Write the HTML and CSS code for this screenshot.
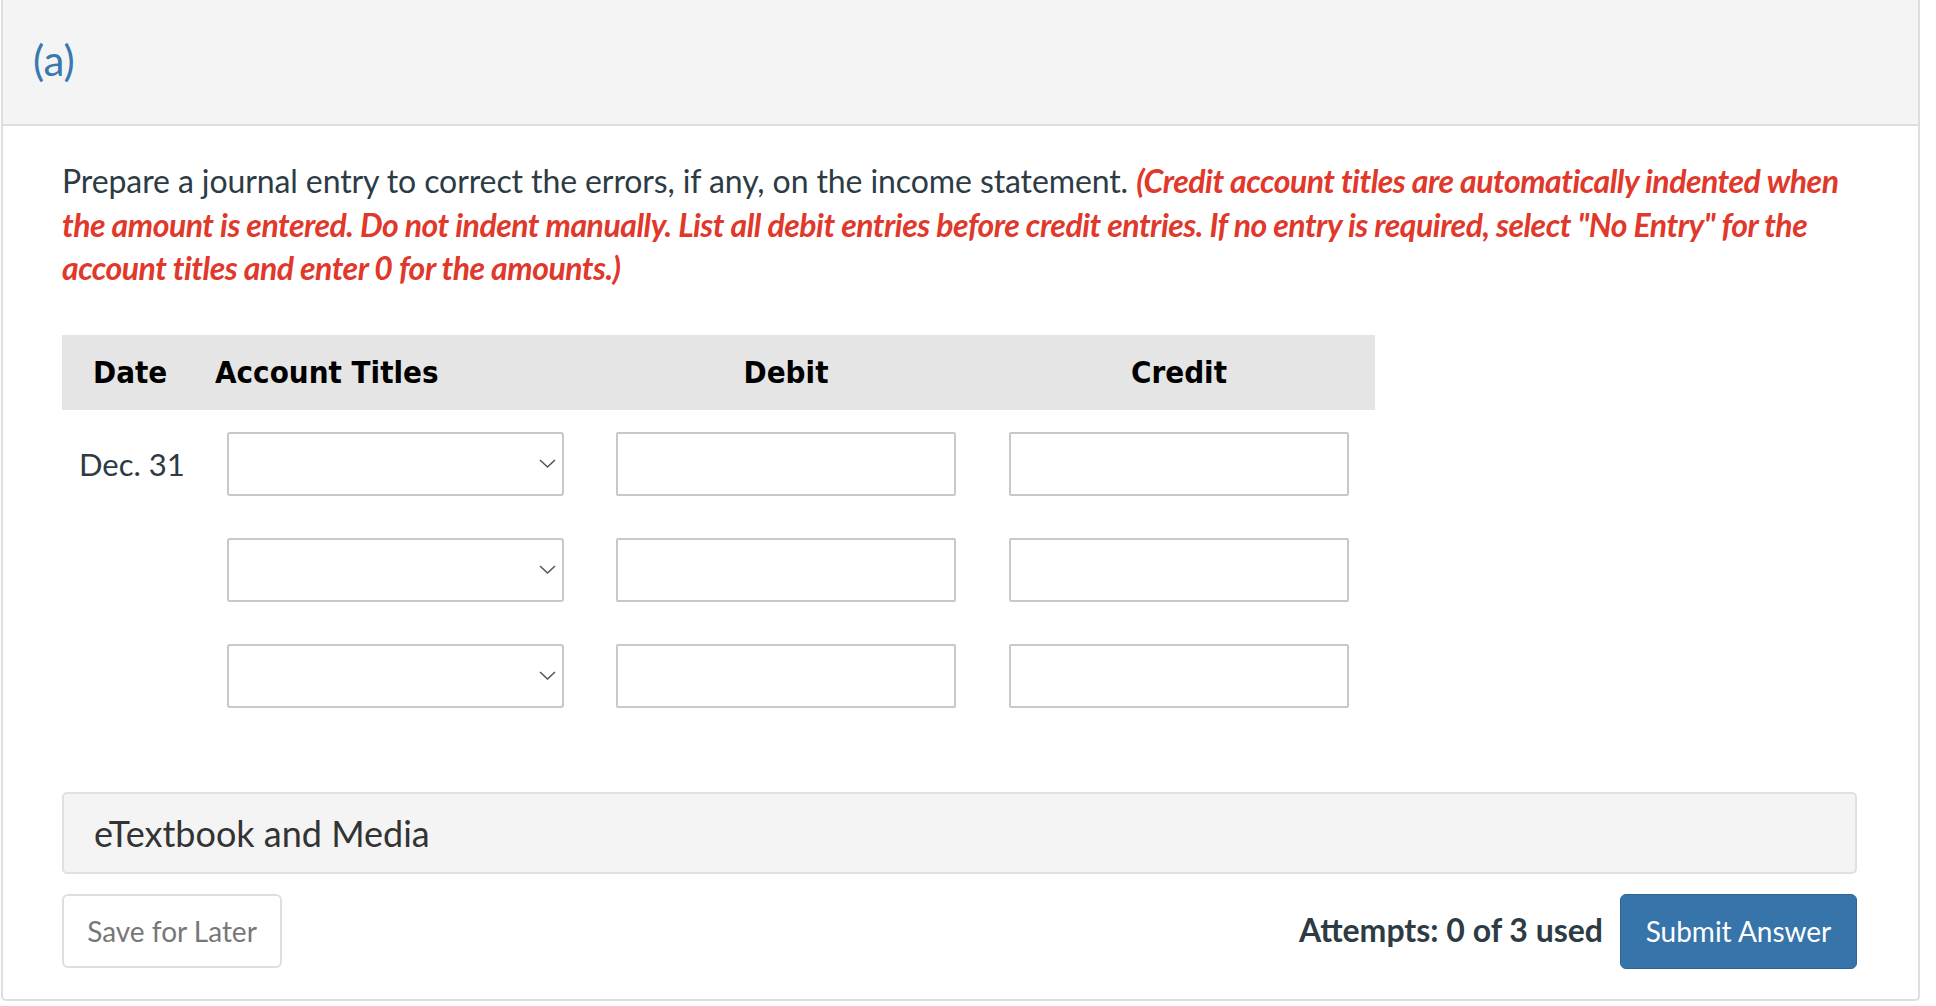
FILE: index.html
```html
<!DOCTYPE html>
<html lang="en">
<head>
  <meta charset="UTF-8" />
  <title>Question (a)</title>
  <link rel="stylesheet" href="styles.css">
</head>
<body>
  <section class="question-part">
    <header class="part-header">
      <span class="part-label">(a)</span>
    </header>

    <div class="part-body">
      <p class="prompt">
        Prepare a journal entry to correct the errors, if any, on the income statement.
        <em class="instructions">(Credit account titles are automatically indented when the amount is entered. Do not indent manually. List all debit entries before credit entries. If no entry is required, select "No Entry" for the account titles and enter 0 for the amounts.)</em>
      </p>

      <div class="journal">
        <div class="journal-head">
          <div class="col-date">Date</div>
          <div class="col-account">Account Titles</div>
          <div class="col-amount">Debit</div>
          <div class="col-amount">Credit</div>
        </div>

        <div class="journal-row">
          <div class="cell-date">Dec. 31</div>
          <div class="cell"><div class="select-box"><svg width="17" height="9" viewBox="0 0 17 9"><path d="M1 1l7.5 7 7.5-7" fill="none" stroke="#555" stroke-width="1.5"/></svg></div></div>
          <div class="cell"><input class="amount" type="text"></div>
          <div class="cell"><input class="amount" type="text"></div>
        </div>
        <div class="journal-row">
          <div class="cell-date"></div>
          <div class="cell"><div class="select-box"><svg width="17" height="9" viewBox="0 0 17 9"><path d="M1 1l7.5 7 7.5-7" fill="none" stroke="#555" stroke-width="1.5"/></svg></div></div>
          <div class="cell"><input class="amount" type="text"></div>
          <div class="cell"><input class="amount" type="text"></div>
        </div>
        <div class="journal-row">
          <div class="cell-date"></div>
          <div class="cell"><div class="select-box"><svg width="17" height="9" viewBox="0 0 17 9"><path d="M1 1l7.5 7 7.5-7" fill="none" stroke="#555" stroke-width="1.5"/></svg></div></div>
          <div class="cell"><input class="amount" type="text"></div>
          <div class="cell"><input class="amount" type="text"></div>
        </div>
      </div>

      <div class="media-box">eTextbook and Media</div>

      <div class="actions">
        <button class="btn-save">Save for Later</button>
        <div class="submit-group">
          <span class="attempts">Attempts: 0 of 3 used</span>
          <button class="btn-submit">Submit Answer</button>
        </div>
      </div>
    </div>
  </section>
</body>
</html>
```

FILE: styles.css
```css
* {
  box-sizing: border-box;
  margin: 0;
  padding: 0;
}
body {
  font-family: 'Lato', 'Liberation Sans', sans-serif;
  background: #fff;
  color: #2d3b45;
}
.question-part {
  width: 1919px;
  margin-left: 1px;
  border: 2px solid #dedede;
  border-top: none;
  border-radius: 0 0 5px 5px;
  height: 1001px;
}
.part-header {
  height: 126px;
  background-color: #f4f4f4;
  border-bottom: 2px solid #dedede;
  display: flex;
  align-items: center;
  padding-left: 30px;
  padding-bottom: 4px;
}
.part-label {
  font-size: 42px;
  color: #3a78b0;
}
.part-body {
  padding: 33px 60px 0 59px;
}
.prompt {
  font-size: 32px;
  line-height: 43.5px;
  width: 1800px;
  letter-spacing: -0.1px;
}
.instructions {
  font-style: italic;
  font-weight: 700;
  color: #e0382b;
  letter-spacing: -0.5px;
}
.journal {
  margin-top: 45px;
  width: 1313px;
  display: flex;
  flex-direction: column;
  gap: 42px;
}
.journal-head,
.journal-row {
  display: grid;
  grid-template-columns: 139px 388px 394px 392px;
  align-items: center;
}
.journal-head {
  height: 75px;
  background-color: #e5e5e5;
  font-family: 'DejaVu Sans Condensed', 'DejaVu Sans', sans-serif;
  font-stretch: condensed;
  font-weight: 700;
  font-size: 31px;
  color: #000;
  margin-bottom: -20px;
}
.col-date {
  padding-left: 31px;
}
.col-account {
  padding-left: 14px;
}
.col-amount {
  text-align: center;
}
.cell-date {
  font-size: 31px;
  padding-left: 17px;
}
.cell {
  display: flex;
  justify-content: center;
}
.select-box {
  width: 337px;
  height: 64px;
  border: 2px solid #c8c8c8;
  border-radius: 3px;
  display: flex;
  align-items: center;
  justify-content: flex-end;
  padding-right: 6px;
}
.amount {
  width: 340px;
  height: 64px;
  border: 2px solid #c8c8c8;
  border-radius: 2px;
  font-size: 28px;
  font-family: inherit;
}
.media-box {
  margin-top: 84px;
  width: 1795px;
  height: 82px;
  background-color: #f4f4f4;
  border: 2px solid #e0e0e0;
  border-radius: 5px;
  font-size: 36px;
  color: #333;
  display: flex;
  align-items: center;
  padding-left: 30px;
}
.actions {
  width: 1795px;
  margin-top: 20px;
  display: flex;
  justify-content: space-between;
  align-items: center;
}
button {
  font-family: inherit;
  cursor: pointer;
}
.btn-save {
  width: 220px;
  height: 74px;
  background: #fff;
  border: 2px solid #dedede;
  border-radius: 6px;
  font-size: 28px;
  color: #777;
}
.submit-group {
  display: flex;
  align-items: center;
  gap: 17px;
}
.attempts {
  font-weight: 700;
  font-size: 32px;
  color: #2d3b45;
  padding-bottom: 4px;
}
.btn-submit {
  width: 237px;
  height: 75px;
  background-color: #3774a9;
  border: 1px solid #2d6597;
  border-radius: 6px;
  color: #fff;
  font-size: 28px;
}
```
